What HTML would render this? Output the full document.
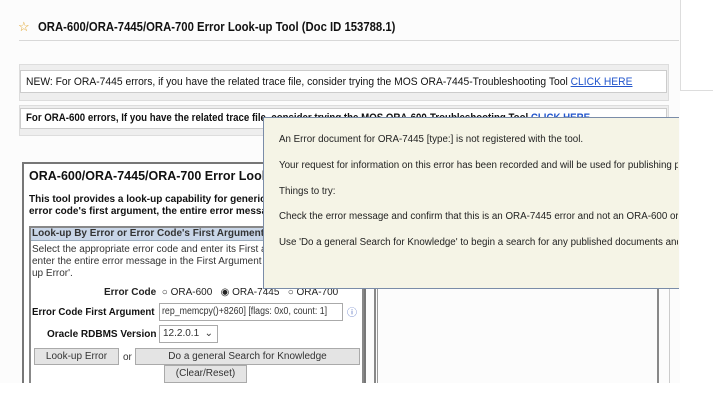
<!DOCTYPE html>
<html><head><meta charset="utf-8"><style>
*{margin:0;padding:0;box-sizing:border-box}
body{width:713px;height:404px;background:#fff;position:relative;overflow:hidden;font-family:"Liberation Sans",Arial,sans-serif;color:#111}
.a{position:absolute;white-space:nowrap}
.sx{transform-origin:0 0;display:inline-block}
.ln{position:absolute;background:#c8c8c8}
</style></head><body>
<div class="a" style="left:0;top:0;width:680px;height:383px;background:#fcfcfc"></div>
<div class="ln" style="left:680px;top:0;width:1px;height:90px;background:#ddd"></div>
<div class="ln" style="left:680px;top:90px;width:33px;height:1px;background:#ddd"></div>
<div class="a" style="left:18px;top:19px;color:#e0a020;font-size:13px">☆</div>
<div class="a" style="left:38px;top:19px;font-size:13px;font-weight:bold"><span class="sx" style="transform:scaleX(0.87)">ORA-600/ORA-7445/ORA-700 Error Look-up Tool (Doc ID 153788.1)</span></div>
<div class="ln" style="left:19px;top:40px;width:660px;height:1px;background:#d8d8d8"></div>

<div class="a" style="left:19px;top:64px;width:650px;height:37px;background:#eee;border:1px solid #ddd"></div>
<div class="a" style="left:20px;top:70px;width:647px;height:23px;background:#fff;border:1px solid #ccc"></div>
<div class="a" style="left:26px;top:76px;font-size:11px"><span class="sx" style="transform:scaleX(0.937)">NEW: For ORA-7445 errors, if you have the related trace file, consider trying the MOS ORA-7445-Troubleshooting Tool <u style="color:#2255cc">CLICK HERE</u></span></div>
<div class="a" style="left:19px;top:105px;width:650px;height:31px;background:#eee;border:1px solid #ddd"></div>
<div class="a" style="left:20px;top:108px;width:647px;height:21px;background:#fff;border:1px solid #ccc"></div>
<div class="a" style="left:26px;top:112px;font-size:11px;font-weight:bold"><span class="sx" style="transform:scaleX(0.88)">For ORA-600 errors, If you have the related trace file, consider trying the MOS ORA-600-Troubleshooting Tool <u style="color:#2255cc">CLICK HERE</u></span></div>

<div class="a" style="left:22px;top:162px;width:344px;height:222px;background:#fff;border:2px solid #777;border-bottom:none"></div>
<div class="a" style="left:29px;top:169px;font-size:12.5px;font-weight:bold">ORA-600/ORA-7445/ORA-700 Error Look-up Tool</div>
<div class="a" style="left:29px;top:194px;font-size:10px;font-weight:bold;line-height:12px">This tool provides a look-up capability for generic<br>error code's first argument, the entire error message</div>
<div class="a" style="left:29px;top:226px;width:335px;height:158px;border:2px solid #888;border-bottom:none"></div>
<div class="a" style="left:31px;top:228px;width:331px;height:13px;background:#c9d6e8;border-bottom:1px solid #9ab"></div>
<div class="a" style="left:32px;top:228px;font-size:10px;font-weight:bold;color:#333">Look-up By Error or Error Code's First Argument</div>
<div class="a" style="left:32px;top:244px;font-size:10px;line-height:12px;color:#333">Select the appropriate error code and enter its First argument or<br>enter the entire error message in the First Argument field and click 'Look-<br>up Error'.</div>
<div class="a" style="left:104px;top:287px;font-size:10px;color:#222"><b>Error Code</b> &nbsp;○ ORA-600 &nbsp;&nbsp;◉ ORA-7445 &nbsp;&nbsp;○ ORA-700</div>
<div class="a" style="left:32px;top:307px;font-size:10px;font-weight:bold"><span class="sx" style="transform:scaleX(0.97)">Error Code First Argument</span></div>
<div class="a" style="left:159px;top:303px;width:184px;height:18px;border:1px solid #aaa;font-size:10px;padding:2px 2px;color:#333;overflow:hidden"><span class="sx" style="transform:scaleX(0.88)">rep_memcpy()+8260] [flags: 0x0, count: 1]</span></div>
<div class="a" style="left:347px;top:304px;font-size:10px;color:#5570c0">ⓘ</div>
<div class="a" style="left:47px;top:329px;font-size:10px;font-weight:bold">Oracle RDBMS Version</div>
<div class="a" style="left:159px;top:325px;width:59px;height:18px;border:1px solid #aaa;font-size:10px;padding:2px 3px;color:#333">12.2.0.1 <span style="position:absolute;right:4px">⌄</span></div>
<div class="a" style="left:34px;top:348px;width:85px;height:17px;background:#e4e4e4;border:1px solid #aaa;font-size:10px;text-align:center;line-height:15px;color:#333">Look-up Error</div>
<div class="a" style="left:123px;top:352px;font-size:10px;color:#333">or</div>
<div class="a" style="left:135px;top:348px;width:225px;height:17px;background:#e4e4e4;border:1px solid #aaa;font-size:10px;text-align:center;line-height:15px;color:#333">Do a general Search for Knowledge</div>
<div class="a" style="left:164px;top:365px;width:83px;height:18px;background:#e4e4e4;border:1px solid #aaa;font-size:10px;text-align:center;line-height:16px;color:#333">(Clear/Reset)</div>

<div class="ln" style="left:374px;top:285px;width:2px;height:98px;background:#888"></div>
<div class="ln" style="left:377px;top:285px;width:1px;height:98px;background:#999"></div>
<div class="ln" style="left:657px;top:285px;width:2px;height:98px;background:#888"></div>
<div class="ln" style="left:669px;top:285px;width:1px;height:98px;background:#ccc"></div>
<div class="a" style="left:0;top:383px;width:713px;height:21px;background:#fff"></div>

<div class="a" style="left:263px;top:117px;width:416px;height:172px;background:#f5f4e6;border:1px solid #7a8ca8;border-right:none"></div>
<div class="a" style="left:279px;top:127px;font-size:10px;line-height:25.8px;color:#222;width:399px;overflow:hidden"><span class="sx" style="transform:scaleX(0.977)">An Error document for ORA-7445 [type:] is not registered with the tool.<br>Your request for information on this error has been recorded and will be used for publishing priorities.<br>Things to try:<br>Check the error message and confirm that this is an ORA-7445 error and not an ORA-600 or ORA-700.<br>Use 'Do a general Search for Knowledge' to begin a search for any published documents and bugs.</span></div>
</body></html>
